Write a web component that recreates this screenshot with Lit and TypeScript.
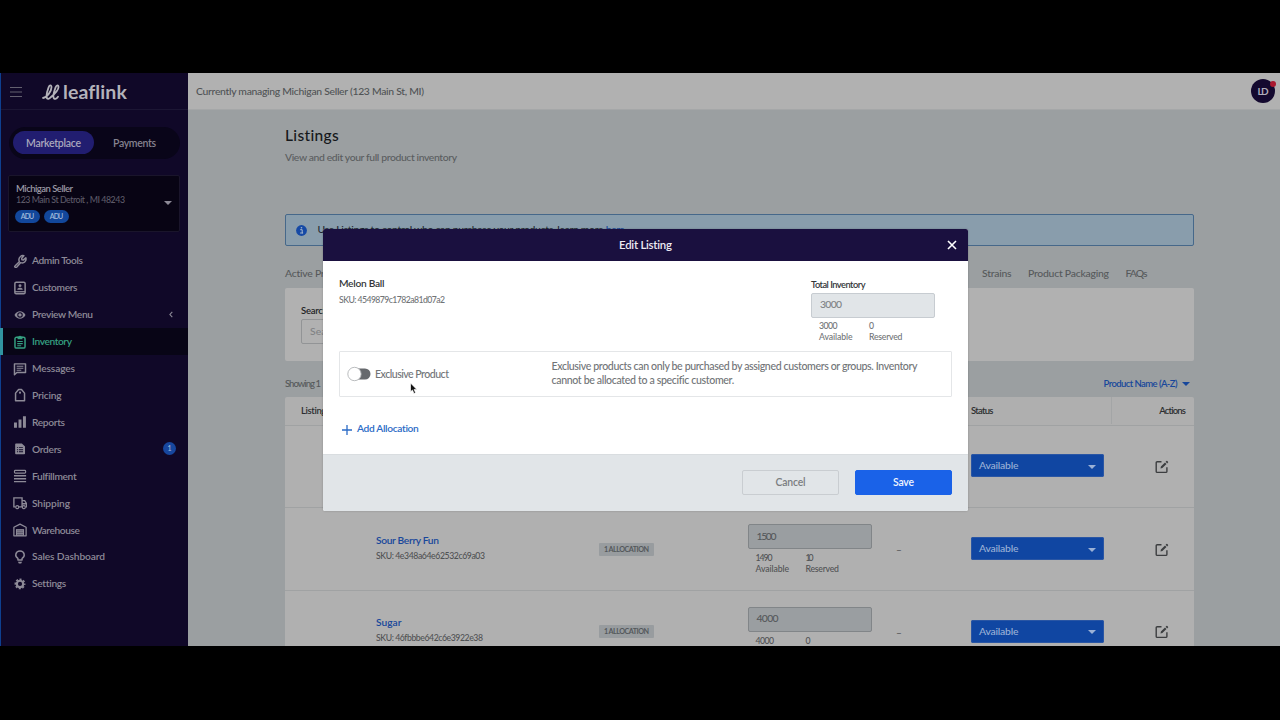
import { LitElement, html, css, svg, nothing } from "lit";
import { customElement } from "lit/decorators.js";

/** Text whose tracking is derived from the width it should occupy. */
const label = (text: string, width: number, cls = "") =>
  html`<span class="label ${cls}" data-w=${width}>${text}</span>`;

const ICONS: Record<string, unknown> = {
  wrench: svg`<path d="M2 12.2 6.4 7.8C5.6 5.6 6.2 3.6 7.6 2.5 8.7 1.5 10.2 1.4 11 1.8L8.8 4.2 9 5.8l1.6.2L13 3.8c.5 1.5.1 3-.9 4-1.2 1.2-2.9 1.4-4.2.9L3.9 13.2c-1.3 1-2.900-.1-1.900-1z" fill="none" stroke="currentColor" stroke-width="1.500" stroke-linejoin="round"/>`,
  customers: svg`<rect x="1.900" y="1.300" width="10.400" height="11.600" rx="1.300" fill="none" stroke="currentColor" stroke-width="1.500"/><path d="M2 10.900h10.200" stroke="currentColor" stroke-width="1.300"/><circle cx="7.100" cy="4.700" r="1.500" fill="currentColor"/><path d="M4.300 8.900c0-2.600 5.600-2.600 5.600 0z" fill="currentColor"/>`,
  eye: svg`<path fill-rule="evenodd" d="M1.500 7C4.300 1.900 9.900 1.900 12.700 7 9.900 12.100 4.300 12.100 1.500 7zM7.100 4.200a2.800 2.800 0 1 0 0 5.600 2.800 2.800 0 0 0 0-5.600z" fill="currentColor"/><circle cx="7.100" cy="7" r="1.700" fill="currentColor"/>`,
  clipboard: svg`<rect x="2" y="2.300" width="10.200" height="11" rx="1.500" fill="none" stroke="currentColor" stroke-width="1.500"/><path d="M4.600 1.600h1.300a1.300 1.300 0 0 1 2.400 0h1.300v2.600h-5zM4.300 6h5.600v1.100H4.300zM4.300 8.200h5.600v1.100H4.300zM4.300 10.300h4v1h-4z" fill="currentColor"/>`,
  message: svg`<path d="M1.500 1.900h11.200v8.800H3.900L1.500 12.900z" fill="none" stroke="currentColor" stroke-width="1.500" stroke-linejoin="round"/><path d="M3.700 4.300h6.800M3.700 6.300h6.800M3.700 8.300h4.700" stroke="currentColor" stroke-width="1.100"/>`,
  tag: svg`<path d="M2.600 13V5.200L5.700 1.500h2.900l3.100 3.700V13z" fill="none" stroke="currentColor" stroke-width="1.500" stroke-linejoin="round"/><circle cx="7.100" cy="4.700" r="1.100" fill="currentColor"/>`,
  bars: svg`<path d="M1 7.500h3V13H1zM5.600 4.600h3V13h-3zM10.100 1.200h3V13h-3z" fill="currentColor"/>`,
  order: svg`<path fill-rule="evenodd" d="M2.200 2.300q0-.8.800-.8h6l3.200 3.100v7.100q0 .8-.8.8H3q-.8 0-.8-.8zM4 5.200v1h1.100v-1zm2 0v1h4v-1zM4 7.300v1h1.100v-1zm2 0v1h4.200v-1zM4 9.400v1h1.100v-1zm2 0v1h4.200v-1z" fill="currentColor"/>`,
  stack: svg`<rect x="1.500" y="1.400" width="11.300" height="2.800" rx=".8" fill="none" stroke="currentColor" stroke-width="1.200"/><path d="M1 6.800h12.300M1 9.900h12.300M1 12.800h12.300" stroke="currentColor" stroke-width="1.400"/>`,
  truck: svg`<path d="M2.600 11H.9V1.900h8.300V11H6M9.200 4.700h2.600l1.900 2.800V11h-1M9.200 7.800h4.300" fill="none" stroke="currentColor" stroke-width="1.400"/><circle cx="4.300" cy="11.300" r="1.500" fill="none" stroke="currentColor" stroke-width="1.200"/><circle cx="11" cy="11.300" r="1.500" fill="none" stroke="currentColor" stroke-width="1.200"/>`,
  warehouse: svg`<path d="M.9 13V4.300L7.100 1.100l6.200 3.200V13z" fill="none" stroke="currentColor" stroke-width="1.300" stroke-linejoin="round"/><path d="M3 6.200h8.200V13H3z" fill="currentColor"/><path d="M4 8h6.200M4 9.800h6.200M4 11.600h6.200" stroke="#100828" stroke-width=".4"/>`,
  bulb: svg`<path d="M5 10.100V8.500C1.300 6.600 2.500 1 7.100 1s5.800 5.600 2.100 7.500v1.600z" fill="none" stroke="currentColor" stroke-width="1.500" stroke-linejoin="round"/><path d="M5 11.900h4.200L8.300 13.700H5.900z" fill="currentColor"/>`,
  gear: svg`<circle cx="7.100" cy="7" r="3.200" fill="none" stroke="currentColor" stroke-width="2.200"/><circle cx="7.100" cy="7" r="4.700" fill="none" stroke="currentColor" stroke-width="1.700" stroke-dasharray="2.100 1.591" stroke-dashoffset="1.050"/>`,
};

const NAV: Array<[string, string, number]> = [
  ["wrench", "Admin Tools", 51],
  ["customers", "Customers", 45.5],
  ["eye", "Preview Menu", 61],
  ["clipboard", "Inventory", 40],
  ["message", "Messages", 43],
  ["tag", "Pricing", 29.5],
  ["bars", "Reports", 33],
  ["order", "Orders", 29.5],
  ["stack", "Fulfillment", 44.5],
  ["truck", "Shipping", 38],
  ["warehouse", "Warehouse", 48],
  ["bulb", "Sales Dashboard", 73],
  ["gear", "Settings", 34],
];

interface Stock { total: string; tw: number; avail: string; aw: number; res: string; rw: number }
interface Listing extends Stock { name: string; nw: number; sku: string; sw: number }

const EDITING: Listing = { name: "Melon Ball", nw: 45.5, sku: "4549879c1782a81d07a2", sw: 106, total: "3000", tw: 22, avail: "3000", aw: 18.5, res: "0", rw: 5 };

/** The first row sits behind the dialog, so only its controls are listed. */
const ROWS: Array<Listing | null> = [
  null,
  { name: "Sour Berry Fun", nw: 63, sku: "4e348a64e62532c69a03", sw: 109, total: "1500", tw: 20, avail: "1490", aw: 17, res: "10", rw: 8 },
  { name: "Sugar", nw: 25.5, sku: "46fbbbe642c6e3922e38", sw: 107, total: "4000", tw: 22, avail: "4000", aw: 18.5, res: "0", rw: 5 },
];

const stock = (r: Stock) => html`
  <div class="qty">${label(r.total, r.tw)}</div>
  <div class="stock">
    <div>${label(r.avail, r.aw)}<br />${label("Available", 33.5)}</div>
    <div>${label(r.res, r.rw)}<br />${label("Reserved", 33.5)}</div>
  </div>`;

@customElement("app-root")
export class AppRoot extends LitElement {
  static styles = css`
    :host { display: block; width: 1280px; height: 720px; background: #000; overflow: hidden;
      font-family: Lato, "Open Sans", sans-serif; font-size: 10px; font-weight: 500; box-sizing: border-box; padding-top: 73px; }
    * { box-sizing: border-box; }
    svg { display: block; flex: none; }
    .label { white-space: pre; display: inline-block; }
    .app { position: relative; display: flex; height: 573px; overflow: hidden; background: #9b9fa1; }

    .side { width: 188px; flex: none; background: #100828; border-left: 1.500px solid #0e3f8f; color: #8d8a97; }
    .brand { height: 37px; display: flex; align-items: center; padding: 2px 0 0 9px; border-bottom: 1px solid #1c1634; }
    .brand .script { margin-left: 20px; }
    .word { font-size: 19.500px; font-weight: 700; line-height: 24px; color: #b4b3ba; margin: 0 0 0 3px; }
    .switch { margin: 17px 8px 0 8px; height: 32px; border-radius: 16px; background: #090519; display: flex; align-items: center; padding-left: 4px; padding-bottom: 1px; font-size: 10.500px; font-weight: 600; }
    .pill { width: 81px; height: 23px; border-radius: 12px; background: #211d70; color: #aaa8bd; display: flex; align-items: center; justify-content: center; }
    .other { flex: 1; display: flex; justify-content: center; padding-right: 5px; color: #85828f; }
    .seller { margin: 16px 8px 15px 7px; height: 57px; border: 1px solid #1a152b; border-radius: 2px; background: #080414; padding: 6px 7px 8px; display: flex; align-items: center; justify-content: space-between; }
    .seller .who { font-size: 9.500px; line-height: 11px; color: #9a98a4; font-weight: 600; }
    .seller .where { font-size: 8.800px; line-height: 11px; color: #5d5a68; }
    .chips { display: flex; gap: 4px; margin: 5px 0 0 -1px; }
    .chip { width: 25px; height: 13px; border-radius: 7px; background: #12479b; color: #a0bada; font-size: 7px; font-weight: 600; display: flex; align-items: center; justify-content: center; }
    .caret { width: 0; height: 0; border: 4px solid transparent; border-top: 4px solid currentColor; border-bottom: 0; flex: none; }
    .item { height: 26.920px; display: flex; align-items: center; padding: 0 11px 0 12px; gap: 5px; font-size: 10.200px; font-weight: 600; border-left: 0 solid #3194a0; }
    .item svg { margin-top: 1px; }
    .item.on { background: #080516; color: #35a081; margin-left: -1px; border-left-width: 3px; padding-left: 10px; }
    .end { margin-left: auto; }
    .dot { width: 13px; height: 13px; border-radius: 50%; background: #17479e; color: #9fb6d8; font-size: 7px; line-height: 13px; text-align: center; margin-right: 1px; }
    .chev { margin-right: 4px; }

    .main { flex: 1; min-width: 0; }
    .top { height: 37px; background: #b1b1b1; border-bottom: 1px solid #a5a7a8; display: flex; align-items: center; justify-content: space-between; padding: 0 5px 1px 8px; font-size: 10.400px; color: #505355; }
    .avatar { position: relative; width: 24px; height: 24px; border-radius: 50%; background: #14092f; color: #b0adbb; font-size: 10px; font-weight: 700; display: flex; align-items: center; justify-content: center; }
    .alert { position: absolute; top: 2px; right: -1px; width: 6px; height: 6px; border-radius: 50%; background: #a9182f; }
    .page { margin-left: 97px; width: 909px; padding-top: 14px; }
    h1 { margin: 0; font-size: 15.500px; font-weight: 500; line-height: 22px; color: #15181b; }
    .sub { margin-top: 3px; line-height: 16px; font-size: 10.400px; color: #5a5d5f; }
    .banner { margin-top: 49px; height: 32px; border: 1px solid #46688a; border-radius: 2px; background: #899dac; display: flex; align-items: center; padding: 0 10px 2px; gap: 10.500px; font-size: 10.400px; color: #1f2932; }
    .banner svg { margin-top: 3px; }
    .link { color: #17479b; }
    .tabs { height: 42px; display: flex; justify-content: space-between; padding: 19px 46.500px 0 0; font-size: 10.400px; line-height: 16px; color: #56595b; }
    .tabs div { display: flex; gap: 16.500px; }
    .card { height: 73px; border-radius: 2px; background: #b1b1b1; padding: 16px; font-size: 9.500px; line-height: 14px; color: #222426; font-weight: 600; }
    .field { margin-top: 1px; width: 300px; height: 25px; border: 1px solid #929496; border-radius: 2px; padding: 4px 8px; font-size: 10.400px; color: #808284; font-weight: 500; }
    .meta { height: 36px; padding: 16px 4px 0 0; display: flex; justify-content: space-between; align-items: flex-start; font-size: 9.500px; line-height: 14px; color: #55585a; }
    .sort { display: flex; align-items: center; gap: 4.500px; color: #17479b; font-weight: 600; }
    .row { display: grid; grid-template-columns: 91px 223px 149px 148px 75px 140px 83px; height: 82.800px; background: #b0b0b0; border-bottom: 1px solid #a0a2a3; align-items: center; color: #505254; }
    .row.head { height: 28.500px; font-size: 9.500px; font-weight: 600; color: #2c2e30; background: #afafaf; border-radius: 2px 2px 0 0; }
    .row.head .l { padding-left: 16px; }
    .row.head .r { border-left: 1px solid #a3a5a6; height: 27px; display: flex; align-items: center; justify-content: flex-end; padding-right: 8px; }
    .name { font-size: 10.200px; line-height: 14px; font-weight: 600; color: #17479b; margin-top: -3px; }
    .sku { font-size: 8.700px; line-height: 14px; margin-top: 2px; color: #505254; }
    .tag { width: 55px; height: 13px; background: #989c9f; border-radius: 1px; font-size: 7.200px; font-weight: 700; color: #54585b; display: flex; align-items: center; justify-content: center; }
    .qty { width: 124px; height: 25px; border: 1px solid #818588; background: #9a9ea1; border-radius: 2px; padding: 0 8px 2px; font-size: 10.400px; color: #55585b; display: flex; align-items: center; }
    .stock { display: flex; gap: 16.500px; padding: 3px 0 0 8px; font-size: 8.700px; line-height: 11px; }
    .row .holding { margin-left: -.5px; }
    .select { width: 132.500px; height: 23px; border-radius: 2px; background: #1046a2; outline: 1px solid #2a56a4; outline-offset: -1px; color: #9bb1d6; display: flex; align-items: center; justify-content: space-between; padding: 0 8px 1px; font-size: 10.400px; margin-top: -1px; }
    .select .caret { border-width: 4px 4.500px 0; margin-top: 3px; }
    .edit { justify-self: start; margin: 1px 0 0 43px; }

    .modal { position: absolute; left: 323px; top: 156px; width: 645px; height: 282px; border-radius: 2px; background: #fff; overflow: hidden; display: flex; flex-direction: column; color: #717477; box-shadow: 0 0 2px rgba(0,0,0,.25); }
    .mhead { height: 32px; background: #1a103f; color: #eceaf2; display: flex; align-items: center; justify-content: center; position: relative; font-size: 11.400px; padding-bottom: 2px; font-weight: 600; flex: none; }
    .close { position: absolute; right: 11px; top: 11px; }
    .mbody { flex: 1; padding: 14px 16px 0; }
    .product { display: flex; justify-content: space-between; height: 76px; padding-right: 17px; }
    .product .t { font-size: 10.200px; line-height: 16px; color: #333638; font-weight: 600; }
    .product .sku { margin-top: 2px; color: #717477; }
    .inv { font-size: 9.300px; color: #333638; font-weight: 600; line-height: 17px; padding-top: 1px; }
    .inv .qty { background: #e1e5e8; border-color: #c7ccd1; font-weight: 500; color: #7e8285; }
    .inv .stock { font-weight: 500; color: #717477; padding-top: 2px; }
    .excl { height: 46px; border: 1px solid #e4e6e8; border-radius: 1px; display: flex; align-items: center; padding: 0 8px 0 7px; font-size: 10.600px; line-height: 14px; }
    .excl .desc { margin-left: 102.500px; padding-bottom: 3px; }
    .excl .tl { margin-left: 4px; padding-bottom: 1px; }
    .add { display: flex; align-items: center; gap: 5px; margin: 23px 0 0 3px; color: #2b6bc6; font-size: 10.200px; line-height: 16px; font-weight: 600; }
    .add svg { margin-top: 3px; }
    .mfoot { height: 57px; flex: none; background: #e1e5e8; border-top: 1px solid #d9dde0; display: flex; justify-content: flex-end; gap: 16px; padding: 15px 16px; }
    .btn { width: 97px; height: 25px; border-radius: 2px; border: 1px solid #c9cdd1; display: flex; align-items: center; justify-content: center; font-size: 10.400px; font-weight: 600; color: #7a7d80; padding-bottom: 1px; }
    .btn.go { background: #1a62e8; border-color: #1a62e8; color: #f1f5fe; }
    .cursor { position: absolute; left: 409px; top: 309px; }
  `;

  protected firstUpdated() {
    this.renderRoot.querySelectorAll<HTMLElement>("[data-w]").forEach((el) => {
      const target = Number(el.dataset.w);
      const count = Math.max(1, (el.textContent ?? "").length - 1);
      const spacing = (target - el.getBoundingClientRect().width) / count;
      el.style.letterSpacing = `${spacing.toFixed(3)}px`;
      el.style.marginRight = `${(-spacing).toFixed(3)}px`;
    });
  }

  private sidebar() {
    return html`<nav class="side">
      <div class="brand">
        <svg width="12" height="12" viewBox="0 0 12 12"><path d="M0 1.500h12M0 6h12M0 10.500h12" stroke="#63606f" stroke-width="1.100" /></svg>
        <svg class="script" width="18" height="17" viewBox="0 0 18 17"><path d="M1 14C5 13.500 9.500 7 9.500 3.300 9.500.8 7.600.8 6.600 3.300 5.400 6.500 4 11 4.600 13.600c.6 2.300 2.900 1.200 4.100-.3C12.500 10 16.500 6.300 16.500 3.200 16.500.8 14.600.8 13.600 3.300 12.400 6.500 10.900 11 11.500 13.600c.6 2.300 2.900 1.300 4.500-.9" fill="none" stroke="#b4b3ba" stroke-width="1.800" stroke-linecap="round" /></svg>
        <div class="word">${label("leaflink", 64)}</div>
      </div>
      <div class="switch">
        <div class="pill">${label("Marketplace", 55)}</div>
        <div class="other">${label("Payments", 43)}</div>
      </div>
      <div class="seller">
        <div>
          <div class="who">${label("Michigan Seller", 57)}</div>
          <div class="where">${label("123 Main St Detroit , MI 48243", 109)}</div>
          <div class="chips"><span class="chip">${label("ADU", 13.5)}</span><span class="chip">${label("ADU", 13.5)}</span></div>
        </div>
        <i class="caret"></i>
      </div>
      ${NAV.map(([icon, text, w]) => html`<div class="item ${text === "Inventory" ? "on" : ""}">
        <svg width="14" height="14" viewBox="0 0 14.200 14.200">${ICONS[icon]}</svg>${label(text, w)}
        ${text === "Preview Menu" ? html`<svg class="end chev" width="4" height="7" viewBox="0 0 4 7"><path d="M3.300.8.900 3.500l2.400 2.700" fill="none" stroke="currentColor" stroke-width="1.100" /></svg>` : nothing}
        ${text === "Orders" ? html`<span class="end dot">1</span>` : nothing}
      </div>`)}
    </nav>`;
  }

  private row(r: Listing | null) {
    return html`<div class="row">
      <span></span>
      ${r
        ? html`<div><div class="name">${label(r.name, r.nw)}</div><div class="sku">${label(`SKU: ${r.sku}`, r.sw)}</div></div>
            <div class="tag">${label("1 ALLOCATION", 45)}</div>
            <div class="holding">${stock(r)}</div>
            <div>${label("–", 5)}</div>`
        : html`<span></span><span></span><span></span><span></span>`}
      <div class="select">${label("Available", 39.5)}<i class="caret"></i></div>
      <svg class="edit" width="16" height="16" viewBox="0 0 16 16"><path d="M7.500 2.700H3.200q-1 0-1 1v8.700q0 1 1 1h8.700q1 0 1-1V8.200" fill="none" stroke="#3c3e40" stroke-width="1.400" /><path d="M6.900 7.500 11 3.400l1.500 1.500L8.400 9l-1.900.5zM11.600 2.800l.8-.8q.5-.4 1 .1l.6.6q.5.5 0 .9l-.8.8z" fill="#3c3e40" /></svg>
    </div>`;
  }

  private modal() {
    return html`<section class="modal">
      <header class="mhead">${label("Edit Listing", 53)}
        <svg class="close" width="10" height="10" viewBox="0 0 10 10"><path d="m1 1 8 8M9 1 1 9" stroke="#fff" stroke-width="1.600" /></svg>
      </header>
      <div class="mbody">
        <div class="product">
          <div><div class="t">${label(EDITING.name, EDITING.nw)}</div><div class="sku">${label(`SKU: ${EDITING.sku}`, EDITING.sw)}</div></div>
          <div class="inv">${label("Total Inventory", 54.5)}${stock(EDITING)}</div>
        </div>
        <div class="excl">
          <svg width="24" height="16" viewBox="0 0 24 16"><rect x="2" y="2.500" width="21.500" height="11" rx="5.500" fill="#66696d" /><circle cx="7.500" cy="8" r="6.700" fill="#fff" stroke="#a9acaf" stroke-width=".8" /></svg>
          <span class="tl">${label("Exclusive Product", 74)}</span>
          <div class="desc">${label("Exclusive products can only be purchased by assigned customers or groups. Inventory", 366)}<br />${label("cannot be allocated to a specific customer.", 182.5)}</div>
        </div>
        <div class="add"><svg width="10" height="10" viewBox="0 0 10 10"><path d="M5 0v10M0 5h10" stroke="currentColor" stroke-width="1.300" /></svg>${label("Add Allocation", 62)}</div>
      </div>
      <footer class="mfoot"><div class="btn">${label("Cancel", 30)}</div><div class="btn go">${label("Save", 21)}</div></footer>
    </section>`;
  }

  render() {
    return html`<div class="app">
      ${this.sidebar()}
      <main class="main">
        <div class="top">${label("Currently managing Michigan Seller (123 Main St, MI)", 228)}<div class="avatar">${label("LD", 11)}<i class="alert"></i></div></div>
        <div class="page">
          <h1>${label("Listings", 54)}</h1>
          <div class="sub">${label("View and edit your full product inventory", 172)}</div>
          <div class="banner">
            <svg width="11" height="11" viewBox="0 0 11 11"><circle cx="5.500" cy="5.500" r="5.400" fill="#1549a5" /><path d="M4.200 4.700h2v3.200h.7M4.100 8h3" fill="none" stroke="#a5b7cd" stroke-width="1" /><circle cx="5.500" cy="2.700" r=".8" fill="#a5b7cd" /></svg>
            <span>${label("Use Listings to control who can purchase your products, learn more ", 288.5)}<span class="link">${label("here", 19)}</span></span>
          </div>
          <div class="tabs"><div>${label("Active Products", 69)}</div><div>${label("Strains", 29.5)}${label("Product Packaging", 81)}${label("FAQs", 22)}</div></div>
          <div class="card">${label("Search", 27)}<div class="field">${label("Search", 31)}</div></div>
          <div class="meta">${label("Showing 1", 36)}<span class="sort">${label("Product Name (A-Z)", 74)}<i class="caret"></i></span></div>
          <div class="row head"><span class="l">${label("Listing", 25.5)}</span><span></span><span></span><span></span><span></span><span>${label("Status", 22.5)}</span><span class="r">${label("Actions", 27)}</span></div>
          ${ROWS.map((r) => this.row(r))}
        </div>
      </main>
      ${this.modal()}
      <svg class="cursor" width="9" height="13" viewBox="0 0 9 13"><path d="M1.500 1v8.800l2-1.800 1.400 3.500 1.700-.7-1.500-3.400h2.700z" fill="#111" stroke="#fff" stroke-width=".7" /></svg>
    </div>`;
  }
}
